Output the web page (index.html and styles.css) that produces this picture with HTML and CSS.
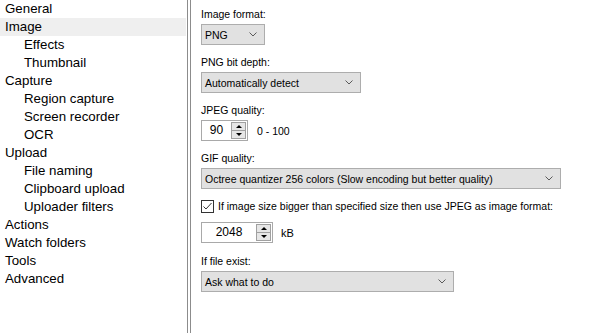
FILE: index.html
```html
<!DOCTYPE html>
<html lang="en">
<head>
    <meta charset="UTF-8">
    <title>Task settings - Image</title>
    <link rel="stylesheet" href="styles.css">
</head>
<body>
    <div class="window">
        <ul class="tree">
            <li>General</li>
            <li class="selected">Image</li>
            <li class="sub">Effects</li>
            <li class="sub">Thumbnail</li>
            <li>Capture</li>
            <li class="sub">Region capture</li>
            <li class="sub">Screen recorder</li>
            <li class="sub">OCR</li>
            <li>Upload</li>
            <li class="sub">File naming</li>
            <li class="sub">Clipboard upload</li>
            <li class="sub">Uploader filters</li>
            <li>Actions</li>
            <li>Watch folders</li>
            <li>Tools</li>
            <li>Advanced</li>
        </ul>

        <div class="splitter"></div>

        <div class="panel">
            <div class="group">
                <div class="label">Image format:</div>
                <div class="combo combo-format">
                    <span>PNG</span>
                    <svg class="chevron" width="8" height="5" viewBox="0 0 8 5"><polyline points="0.5,0.5 4,4 7.5,0.5"/></svg>
                </div>
            </div>

            <div class="group">
                <div class="label">PNG bit depth:</div>
                <div class="combo combo-depth">
                    <span>Automatically detect</span>
                    <svg class="chevron" width="8" height="5" viewBox="0 0 8 5"><polyline points="0.5,0.5 4,4 7.5,0.5"/></svg>
                </div>
            </div>

            <div class="group">
                <div class="label">JPEG quality:</div>
                <div class="row">
                    <div class="spin spin-quality">
                        <span class="spin-value">90</span>
                        <div class="spin-buttons">
                            <div class="spin-up"><i class="arrow-up"></i></div>
                            <div class="spin-down"><i class="arrow-down"></i></div>
                        </div>
                    </div>
                    <span class="hint">0 - 100</span>
                </div>
            </div>

            <div class="group">
                <div class="label">GIF quality:</div>
                <div class="combo combo-gif">
                    <span>Octree quantizer 256 colors (Slow encoding but better quality)</span>
                    <svg class="chevron" width="8" height="5" viewBox="0 0 8 5"><polyline points="0.5,0.5 4,4 7.5,0.5"/></svg>
                </div>
            </div>

            <div class="check-row">
                <span class="checkbox">
                    <svg width="11" height="11" viewBox="0 0 11 11"><polyline points="1.5,5.5 4,8 9.5,2"/></svg>
                </span>
                <span>If image size bigger than specified size then use JPEG as image format:</span>
            </div>

            <div class="row size-row">
                <div class="spin spin-size">
                    <span class="spin-value">2048</span>
                    <div class="spin-buttons">
                        <div class="spin-up"><i class="arrow-up"></i></div>
                        <div class="spin-down"><i class="arrow-down"></i></div>
                    </div>
                </div>
                <span class="unit">kB</span>
            </div>

            <div class="group last">
                <div class="label">If file exist:</div>
                <div class="combo combo-exist">
                    <span>Ask what to do</span>
                    <svg class="chevron" width="8" height="5" viewBox="0 0 8 5"><polyline points="0.5,0.5 4,4 7.5,0.5"/></svg>
                </div>
            </div>
        </div>
    </div>
</body>
</html>
```

FILE: styles.css
```css
body {
    margin: 0;
    background: #ffffff;
    font-family: "Liberation Sans", Arial, sans-serif;
    color: #000000;
}
.window {
    display: flex;
    height: 333px;
    overflow: hidden;
}
.tree {
    list-style: none;
    margin: 0;
    padding: 0;
    width: 187px;
    font-size: 13.3px;
    line-height: 18px;
}
.tree li {
    padding-left: 5px;
    white-space: nowrap;
}
.tree li.sub {
    padding-left: 24px;
}
.tree li.selected {
    background: #efefef;
    margin-right: 1px;
}
.splitter {
    width: 2px;
    border-left: 1px solid #8c8c8c;
    border-right: 1px solid #8c8c8c;
}
.panel {
    flex: 1;
    padding: 7px 0 0 10px;
    font-size: 10.5px;
}
.group {
    margin-bottom: 10px;
}
.label {
    height: 14px;
    line-height: 14px;
    margin-bottom: 3px;
    white-space: nowrap;
}
.combo {
    box-sizing: border-box;
    height: 21px;
    display: flex;
    align-items: center;
    justify-content: space-between;
    padding: 0 7px 0 3px;
    border: 1px solid #adadad;
    background: #e1e1e1;
    white-space: nowrap;
}
.chevron {
    fill: none;
    stroke: #5a5a5a;
    stroke-width: 1;
}
.combo-format { width: 64px; }
.combo-depth { width: 160px; }
.combo-gif { width: 360px; }
.combo-exist { width: 253px; }

.row {
    display: flex;
    align-items: center;
}
.spin {
    box-sizing: border-box;
    height: 21px;
    display: flex;
    border: 1px solid #a9a9a9;
    background: #ffffff;
}
.spin-quality { width: 47px; }
.spin-size { width: 72px; }
.spin-value {
    flex: 1;
    text-align: center;
    line-height: 19px;
    font-size: 12px;
}
.spin-buttons {
    box-sizing: border-box;
    width: 15px;
    margin: 1px 1px 1px 0;
    display: flex;
    flex-direction: column;
    border: 1px solid #a0a0a0;
    background: #e6e6e6;
}
.spin-up,
.spin-down {
    flex: 1;
    display: flex;
    align-items: center;
    justify-content: center;
}
.spin-up {
    border-bottom: 1px solid #a0a0a0;
}
.arrow-up {
    width: 0;
    height: 0;
    border-left: 3px solid transparent;
    border-right: 3px solid transparent;
    border-bottom: 3px solid #000000;
}
.arrow-down {
    width: 0;
    height: 0;
    border-left: 3px solid transparent;
    border-right: 3px solid transparent;
    border-top: 3px solid #000000;
}
.hint {
    margin-left: 9px;
    font-size: 10.5px;
}
.unit {
    margin-left: 8px;
    font-size: 11px;
}
.check-row {
    display: flex;
    align-items: center;
    height: 14px;
    margin-top: 1px;
    white-space: nowrap;
}
.checkbox {
    box-sizing: border-box;
    width: 13px;
    height: 13px;
    margin-right: 4px;
    border: 1px solid #333333;
    background: #ffffff;
    display: flex;
}
.checkbox polyline {
    fill: none;
    stroke: #333333;
    stroke-width: 1;
}
.size-row {
    margin-top: 9px;
}
.group.last {
    margin-top: 11px;
}
```
